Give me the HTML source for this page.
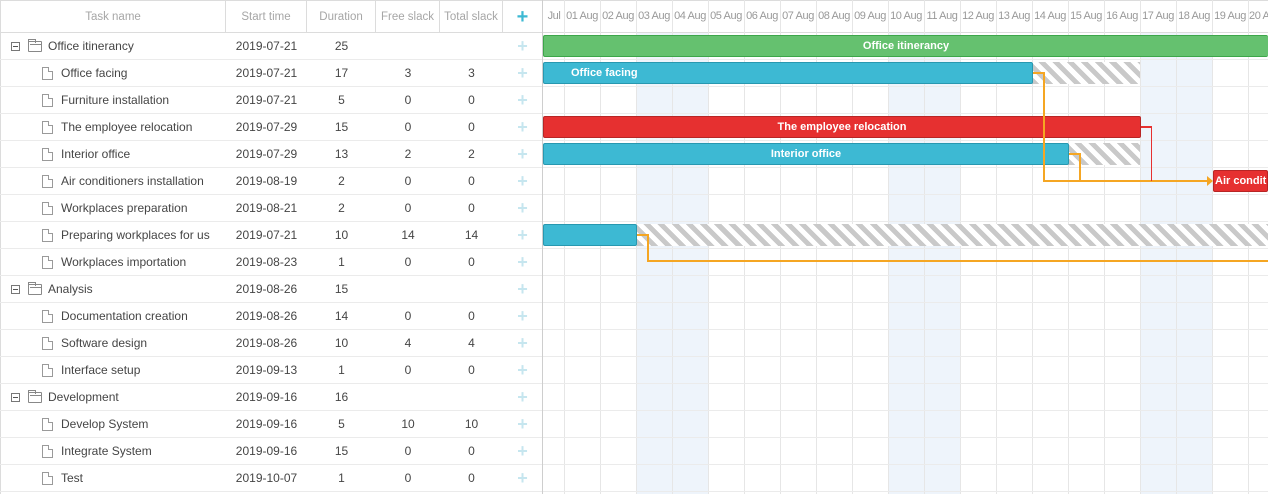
<!DOCTYPE html>
<html><head><meta charset="utf-8"><style>
*{margin:0;padding:0;box-sizing:border-box}
body{width:1268px;height:494px;overflow:hidden;background:#fff;font-family:"Liberation Sans",Arial,sans-serif;font-size:12px;color:#454545;position:relative}
.a{position:absolute}
.hd{position:absolute;top:0;height:33px;line-height:33px;text-align:center;color:#a6a6a6;font-size:11.5px;border-right:1px solid #dcdcdc;border-bottom:1px solid #dcdcdc;border-top:1px solid #dcdcdc}
.row{position:absolute;left:0;width:542px;height:27px;border-bottom:1px solid #ebebeb;line-height:27px}
.row span{position:absolute;top:0}
.c1{left:226px;width:81px;text-align:center}
.c2{left:307px;width:69px;text-align:center}
.c3{left:376px;width:64px;text-align:center}
.c4{left:440px;width:63px;text-align:center}
.c5{left:503px;width:39px;text-align:center;color:#c6e6ef;font-size:18px;font-weight:bold}
.fi{position:absolute;left:42px;top:7px;width:11px;height:13px;border:1px solid #9a9a9a}
.fi:after{content:"";position:absolute;right:-1px;top:-1px;width:4px;height:4px;background:#fff;border-left:1px solid #9a9a9a;border-bottom:1px solid #9a9a9a}
.mb{position:absolute;left:11px;top:9px;width:9px;height:9px;border:1px solid #777}
.mb:after{content:"";position:absolute;left:1px;top:3px;width:5px;height:1px;background:#555}
.fo{position:absolute;left:28px;top:8px;width:14px;height:11px;border:1px solid #888;border-radius:1px}
.fo:before{content:"";position:absolute;left:-1px;top:-3px;width:6px;height:3px;border:1px solid #888;border-bottom:none}
.fo:after{content:"";position:absolute;left:1px;top:2px;width:12px;height:1px;background:#888}
.t1{left:61px}.t0{left:48px}
.sc{position:absolute;top:6px;font-size:11px;letter-spacing:-0.4px;color:#999;text-align:center;width:36px;line-height:20px;white-space:nowrap}
.bar{position:absolute;height:22px;line-height:20px;color:#fff;font-weight:bold;font-size:11px;text-align:center;border-radius:2px}
.hat{position:absolute;height:22px;background:repeating-linear-gradient(45deg,#c9c9c9 0 5px,#fff 5px 10px)}
.ln{position:absolute;background:#f5a623}
</style></head><body>
<div class="hd" style="left:0;width:226px;border-left:1px solid #dcdcdc">Task name</div>
<div class="hd" style="left:226px;width:81px">Start time</div>
<div class="hd" style="left:307px;width:69px">Duration</div>
<div class="hd" style="left:376px;width:64px">Free slack</div>
<div class="hd" style="left:440px;width:63px">Total slack</div>
<div class="hd" style="left:503px;width:40px;color:#3db9d3;font-size:20px;font-weight:bold">+</div>

<div class="a" style="left:542px;top:0;width:1px;height:494px;background:#cecece"></div>
<div class="a" style="left:543px;top:0;width:725px;height:33px;border-top:1px solid #dcdcdc;border-bottom:1px solid #dcdcdc"></div>
<div class="a" style="left:637px;top:33px;width:72px;height:461px;background:#eef4fb"></div>
<div class="a" style="left:889px;top:33px;width:72px;height:461px;background:#eef4fb"></div>
<div class="a" style="left:1141px;top:33px;width:72px;height:461px;background:#eef4fb"></div>
<div class="a" style="left:543px;top:0;width:725px;height:494px;background-image:linear-gradient(90deg,#e6e6e6 1px,transparent 1px);background-size:36px 100%;background-position:21px 0"></div>
<div class="a" style="left:543px;top:33px;width:725px;height:461px;background-image:linear-gradient(0deg,#ebebeb 1px,transparent 1px);background-size:100% 27px;background-position:0 0"></div>

<div class="sc" style="left:544px;width:20px">Jul</div>
<div class="sc" style="left:564px">01 Aug</div><div class="sc" style="left:600px">02 Aug</div><div class="sc" style="left:636px">03 Aug</div><div class="sc" style="left:672px">04 Aug</div><div class="sc" style="left:708px">05 Aug</div><div class="sc" style="left:744px">06 Aug</div><div class="sc" style="left:780px">07 Aug</div><div class="sc" style="left:816px">08 Aug</div><div class="sc" style="left:852px">09 Aug</div><div class="sc" style="left:888px">10 Aug</div><div class="sc" style="left:924px">11 Aug</div><div class="sc" style="left:960px">12 Aug</div><div class="sc" style="left:996px">13 Aug</div><div class="sc" style="left:1032px">14 Aug</div><div class="sc" style="left:1068px">15 Aug</div><div class="sc" style="left:1104px">16 Aug</div><div class="sc" style="left:1140px">17 Aug</div><div class="sc" style="left:1176px">18 Aug</div><div class="sc" style="left:1212px">19 Aug</div><div class="sc" style="left:1249px;text-align:left">20 Aug</div>

<div class="a" style="left:0;top:33px;width:1px;height:461px;background:#dcdcdc"></div>
<div class="row" style="top:33px"><i class="mb"></i><i class="fo"></i><span class="t0">Office itinerancy</span><span class="c1">2019-07-21</span><span class="c2">25</span><span class="c5">+</span></div>
<div class="row" style="top:60px"><i class="fi"></i><span class="t1">Office facing</span><span class="c1">2019-07-21</span><span class="c2">17</span><span class="c3">3</span><span class="c4">3</span><span class="c5">+</span></div>
<div class="row" style="top:87px"><i class="fi"></i><span class="t1">Furniture installation</span><span class="c1">2019-07-21</span><span class="c2">5</span><span class="c3">0</span><span class="c4">0</span><span class="c5">+</span></div>
<div class="row" style="top:114px"><i class="fi"></i><span class="t1">The employee relocation</span><span class="c1">2019-07-29</span><span class="c2">15</span><span class="c3">0</span><span class="c4">0</span><span class="c5">+</span></div>
<div class="row" style="top:141px"><i class="fi"></i><span class="t1">Interior office</span><span class="c1">2019-07-29</span><span class="c2">13</span><span class="c3">2</span><span class="c4">2</span><span class="c5">+</span></div>
<div class="row" style="top:168px"><i class="fi"></i><span class="t1">Air conditioners installation</span><span class="c1">2019-08-19</span><span class="c2">2</span><span class="c3">0</span><span class="c4">0</span><span class="c5">+</span></div>
<div class="row" style="top:195px"><i class="fi"></i><span class="t1">Workplaces preparation</span><span class="c1">2019-08-21</span><span class="c2">2</span><span class="c3">0</span><span class="c4">0</span><span class="c5">+</span></div>
<div class="row" style="top:222px"><i class="fi"></i><span class="t1">Preparing workplaces for us</span><span class="c1">2019-07-21</span><span class="c2">10</span><span class="c3">14</span><span class="c4">14</span><span class="c5">+</span></div>
<div class="row" style="top:249px"><i class="fi"></i><span class="t1">Workplaces importation</span><span class="c1">2019-08-23</span><span class="c2">1</span><span class="c3">0</span><span class="c4">0</span><span class="c5">+</span></div>
<div class="row" style="top:276px"><i class="mb"></i><i class="fo"></i><span class="t0">Analysis</span><span class="c1">2019-08-26</span><span class="c2">15</span><span class="c5">+</span></div>
<div class="row" style="top:303px"><i class="fi"></i><span class="t1">Documentation creation</span><span class="c1">2019-08-26</span><span class="c2">14</span><span class="c3">0</span><span class="c4">0</span><span class="c5">+</span></div>
<div class="row" style="top:330px"><i class="fi"></i><span class="t1">Software design</span><span class="c1">2019-08-26</span><span class="c2">10</span><span class="c3">4</span><span class="c4">4</span><span class="c5">+</span></div>
<div class="row" style="top:357px"><i class="fi"></i><span class="t1">Interface setup</span><span class="c1">2019-09-13</span><span class="c2">1</span><span class="c3">0</span><span class="c4">0</span><span class="c5">+</span></div>
<div class="row" style="top:384px"><i class="mb"></i><i class="fo"></i><span class="t0">Development</span><span class="c1">2019-09-16</span><span class="c2">16</span><span class="c5">+</span></div>
<div class="row" style="top:411px"><i class="fi"></i><span class="t1">Develop System</span><span class="c1">2019-09-16</span><span class="c2">5</span><span class="c3">10</span><span class="c4">10</span><span class="c5">+</span></div>
<div class="row" style="top:438px"><i class="fi"></i><span class="t1">Integrate System</span><span class="c1">2019-09-16</span><span class="c2">15</span><span class="c3">0</span><span class="c4">0</span><span class="c5">+</span></div>
<div class="row" style="top:465px"><i class="fi"></i><span class="t1">Test</span><span class="c1">2019-10-07</span><span class="c2">1</span><span class="c3">0</span><span class="c4">0</span><span class="c5">+</span></div>

<div class="bar" style="left:543px;top:35px;width:725px;background:#65c16f;border:1px solid #3da64a;border-right:none">Office itinerancy</div>
<div class="hat" style="left:1032px;top:62px;width:108px"></div>
<div class="bar" style="left:543px;top:62px;width:490px;background:#3db9d3;border:1px solid #2898b0;text-align:left;padding-left:27px">Office facing</div>
<div class="bar" style="left:543px;top:116px;width:598px;background:#e63030;border:1px solid #b82525">The employee relocation</div>
<div class="hat" style="left:1068px;top:143px;width:72px"></div>
<div class="bar" style="left:543px;top:143px;width:526px;background:#3db9d3;border:1px solid #2898b0">Interior office</div>
<div class="bar" style="left:1213px;top:170px;width:55px;background:#e63030;border:1px solid #b82525;text-align:left;padding-left:1px;overflow:hidden;white-space:nowrap">Air conditioners</div>
<div class="hat" style="left:637px;top:224px;width:631px"></div>
<div class="bar" style="left:543px;top:224px;width:94px;background:#3db9d3;border:1px solid #2898b0"></div>

<div class="ln" style="left:1033px;top:72px;width:11px;height:2px"></div>
<div class="ln" style="left:1043px;top:72px;width:2px;height:110px"></div>
<div class="ln" style="left:1043px;top:180px;width:165px;height:2px"></div>
<div class="a" style="left:1207px;top:176px;width:0;height:0;border-left:6px solid #f5a623;border-top:5px solid transparent;border-bottom:5px solid transparent"></div>
<div class="ln" style="left:1069px;top:153px;width:11px;height:2px"></div>
<div class="ln" style="left:1079px;top:153px;width:2px;height:28px"></div>
<div class="ln" style="left:1141px;top:126px;width:11px;height:2px;background:#e63030"></div>
<div class="ln" style="left:1151px;top:126px;width:1px;height:55px;background:#e63030"></div>
<div class="ln" style="left:637px;top:234px;width:11px;height:2px"></div>
<div class="ln" style="left:647px;top:234px;width:2px;height:28px"></div>
<div class="ln" style="left:647px;top:260px;width:621px;height:2px"></div>
</body></html>
